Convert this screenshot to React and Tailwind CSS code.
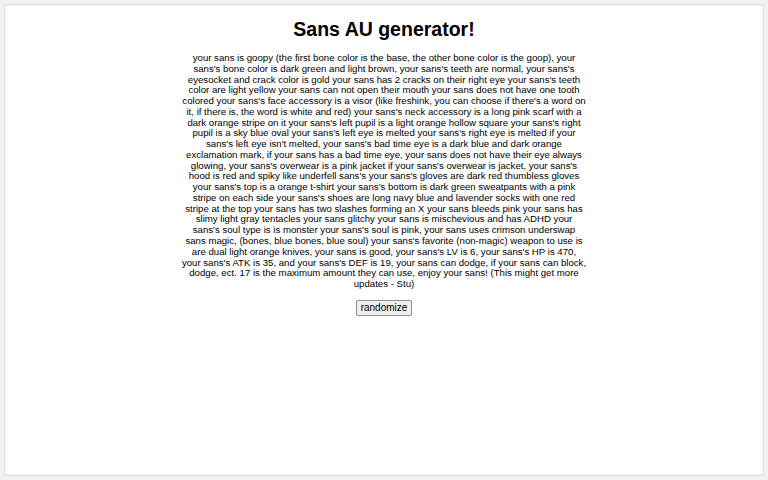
const lines = [
  "your sans is goopy (the first bone color is the base, the other bone color is the goop), your",
  "sans's bone color is dark green and light brown, your sans's teeth are normal, your sans's",
  "eyesocket and crack color is gold your sans has 2 cracks on their right eye your sans's teeth",
  "color are light yellow your sans can not open their mouth your sans does not have one tooth",
  "colored your sans's face accessory is a visor (like freshink, you can choose if there's a word on",
  "it, if there is, the word is white and red) your sans's neck accessory is a long pink scarf with a",
  "dark orange stripe on it your sans's left pupil is a light orange hollow square your sans's right",
  "pupil is a sky blue oval your sans's left eye is melted your sans's right eye is melted if your",
  "sans's left eye isn't melted, your sans's bad time eye is a dark blue and dark orange",
  "exclamation mark, if your sans has a bad time eye, your sans does not have their eye always",
  "glowing, your sans's overwear is a pink jacket if your sans's overwear is jacket, your sans's",
  "hood is red and spiky like underfell sans's your sans's gloves are dark red thumbless gloves",
  "your sans's top is a orange t-shirt your sans's bottom is dark green sweatpants with a pink",
  "stripe on each side your sans's shoes are long navy blue and lavender socks with one red",
  "stripe at the top your sans has two slashes forming an X your sans bleeds pink your sans has",
  "slimy light gray tentacles your sans glitchy your sans is mischevious and has ADHD your",
  "sans's soul type is is monster your sans's soul is pink, your sans uses crimson underswap",
  "sans magic, (bones, blue bones, blue soul) your sans's favorite (non-magic) weapon to use is",
  "are dual light orange knives, your sans is good, your sans's LV is 6, your sans's HP is 470,",
  "your sans's ATK is 35, and your sans's DEF is 19, your sans can dodge, if your sans can block,",
  "dodge, ect. 17 is the maximum amount they can use, enjoy your sans! (This might get more",
  "updates - Stu)",
];

export default function App() {
  return (
    <div className="h-[480px] w-[768px] bg-[#f3f3f3] p-[4px] font-['Liberation_Sans',Arial,sans-serif] text-black">
      <div className="h-[472px] bg-white border border-[#dcdcdc] flex flex-col items-center">
        <h1 className="mt-[12px] text-[19.5px] font-bold leading-[24px]">Sans AU generator!</h1>
        <p className="mt-[12px] text-center text-[9.65px] leading-[10.76px]">
          {lines.map((l, i) => (
            <span key={i} className="block whitespace-nowrap">{l}</span>
          ))}
        </p>
        <button className="mt-[10px] px-[4px] h-[16px] text-[10px] leading-[12px] bg-[#efefef] border border-[#8f8f8f] rounded-[2px]">randomize</button>
      </div>
    </div>
  );
}
